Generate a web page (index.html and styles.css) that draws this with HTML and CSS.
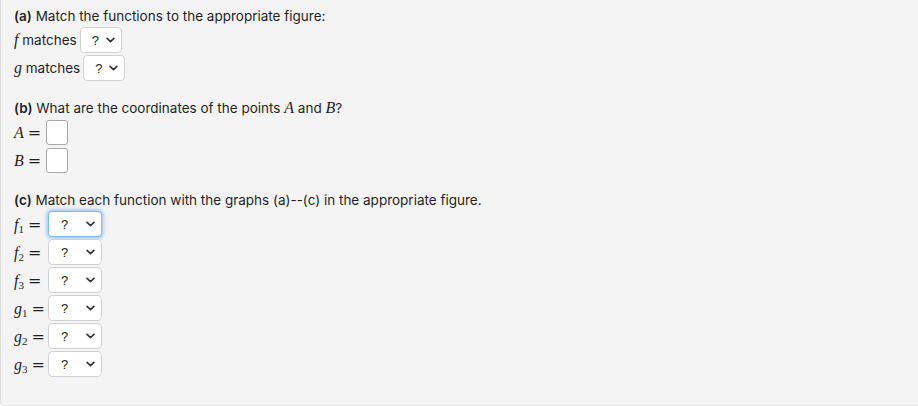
FILE: index.html
```html
<!DOCTYPE html>
<html lang="en">
<head>
<meta charset="utf-8">
<title>Matching functions</title>
<link rel="stylesheet" href="styles.css">
</head>
<body>
<div class="panel">
  <section class="part part-a">
    <p class="prompt"><b>(a)</b> Match the functions to the appropriate figure:</p>
    <div class="row">
      <span class="label"><i class="m">f</i> matches</span>
      <span class="pick pick-sm"><span class="q">?</span><svg class="chev" viewBox="0 0 10 6"><path d="M1.2 1.2 5 4.8 8.8 1.2"/></svg></span>
    </div>
    <div class="row">
      <span class="label"><i class="m">g</i> matches</span>
      <span class="pick pick-sm"><span class="q">?</span><svg class="chev" viewBox="0 0 10 6"><path d="M1.2 1.2 5 4.8 8.8 1.2"/></svg></span>
    </div>
  </section>

  <section class="part part-b">
    <p class="prompt"><b>(b)</b> What are the coordinates of the points <i class="m">A</i> and <i class="m">B</i>?</p>
    <div class="row">
      <span class="eq"><i class="m">A</i><span class="eqs">=</span></span>
      <span class="box"></span>
    </div>
    <div class="row">
      <span class="eq"><i class="m">B</i><span class="eqs">=</span></span>
      <span class="box"></span>
    </div>
  </section>

  <section class="part part-c">
    <p class="prompt"><b>(c)</b> Match each function with the graphs (a)--(c) in the appropriate figure.</p>
    <div class="row row-c">
      <span class="eq"><i class="m">f</i><sub class="m">1</sub><span class="eqs">=</span></span>
      <span class="pick pick-lg focus"><span class="q">?</span><svg class="chev" viewBox="0 0 10 6"><path d="M1.2 1.2 5 4.8 8.8 1.2"/></svg></span>
    </div>
    <div class="row row-c">
      <span class="eq"><i class="m">f</i><sub class="m">2</sub><span class="eqs">=</span></span>
      <span class="pick pick-lg"><span class="q">?</span><svg class="chev" viewBox="0 0 10 6"><path d="M1.2 1.2 5 4.8 8.8 1.2"/></svg></span>
    </div>
    <div class="row row-c">
      <span class="eq"><i class="m">f</i><sub class="m">3</sub><span class="eqs">=</span></span>
      <span class="pick pick-lg"><span class="q">?</span><svg class="chev" viewBox="0 0 10 6"><path d="M1.2 1.2 5 4.8 8.8 1.2"/></svg></span>
    </div>
    <div class="row row-c">
      <span class="eq"><i class="m">g</i><sub class="m">1</sub><span class="eqs">=</span></span>
      <span class="pick pick-lg"><span class="q">?</span><svg class="chev" viewBox="0 0 10 6"><path d="M1.2 1.2 5 4.8 8.8 1.2"/></svg></span>
    </div>
    <div class="row row-c">
      <span class="eq"><i class="m">g</i><sub class="m">2</sub><span class="eqs">=</span></span>
      <span class="pick pick-lg"><span class="q">?</span><svg class="chev" viewBox="0 0 10 6"><path d="M1.2 1.2 5 4.8 8.8 1.2"/></svg></span>
    </div>
    <div class="row row-c">
      <span class="eq"><i class="m">g</i><sub class="m">3</sub><span class="eqs">=</span></span>
      <span class="pick pick-lg"><span class="q">?</span><svg class="chev" viewBox="0 0 10 6"><path d="M1.2 1.2 5 4.8 8.8 1.2"/></svg></span>
    </div>
  </section>
</div>
</body>
</html>
```

FILE: styles.css
```css
html, body {
  margin: 0;
  padding: 0;
  background: #ffffff;
}

.panel {
  box-sizing: border-box;
  height: 406px;
  background: #f4f4f4;
  border-left: 1px solid #dedede;
  border-bottom: 1px solid #e6e6e6;
  border-bottom-left-radius: 4px;
  padding: 6px 0 0 13px;
  font-family: Inter, "Liberation Sans", Arial, sans-serif;
  font-size: 13.5px;
  color: #1f1f1f;
}

.part {
  display: flex;
  flex-direction: column;
}

.part-b { margin-top: 16px; }
.part-c { margin-top: 16px; }

.prompt {
  margin: 0;
  line-height: 20px;
  height: 20px;
  white-space: nowrap;
}

.prompt b { font-weight: 600; }

.row {
  display: flex;
  align-items: center;
  height: 28px;
}

.label {
  margin-right: 3px;
  white-space: nowrap;
}

.m {
  font-family: "Liberation Serif", "Times New Roman", serif;
  font-size: 16px;
}

i.m { font-style: italic; }

.eq {
  display: inline-flex;
  align-items: baseline;
  white-space: nowrap;
  color: #1f1f1f;
}

.eq sub {
  font-size: 11px;
  font-style: normal;
  vertical-align: baseline;
  position: relative;
  top: 3px;
}

/* equals sign drawn wide like typeset math */
.eqs {
  font-family: "DejaVu Serif", serif;
  font-size: 16px;
  margin-left: 4px;
  margin-right: 5px;
}

.pick {
  box-sizing: border-box;
  display: inline-flex;
  align-items: center;
  height: 26px;
  background: #fff;
  border: 1px solid #d2d2d2;
  border-radius: 4px;
  font-family: "Liberation Sans", Arial, sans-serif;
  font-size: 13px;
  color: #222;
}

.pick-sm {
  width: 42px;
  padding: 0 6px 0 11px;
  justify-content: space-between;
}

.pick-lg {
  width: 54px;
  padding: 0 6px 0 12px;
  justify-content: space-between;
}

.pick.focus {
  border-color: #7fb6f0;
  box-shadow: 0 0 3px 2px rgba(120, 175, 240, 0.55);
}

.chev {
  width: 9px;
  height: 6px;
  fill: none;
  stroke: #333;
  stroke-width: 1.8;
  stroke-linecap: round;
  stroke-linejoin: round;
}

.box {
  box-sizing: border-box;
  width: 22px;
  height: 25px;
  background: #fff;
  border: 1px solid #a8a8a8;
  border-radius: 3px;
}

.row-c .eq {
  width: 34px;
}
```
